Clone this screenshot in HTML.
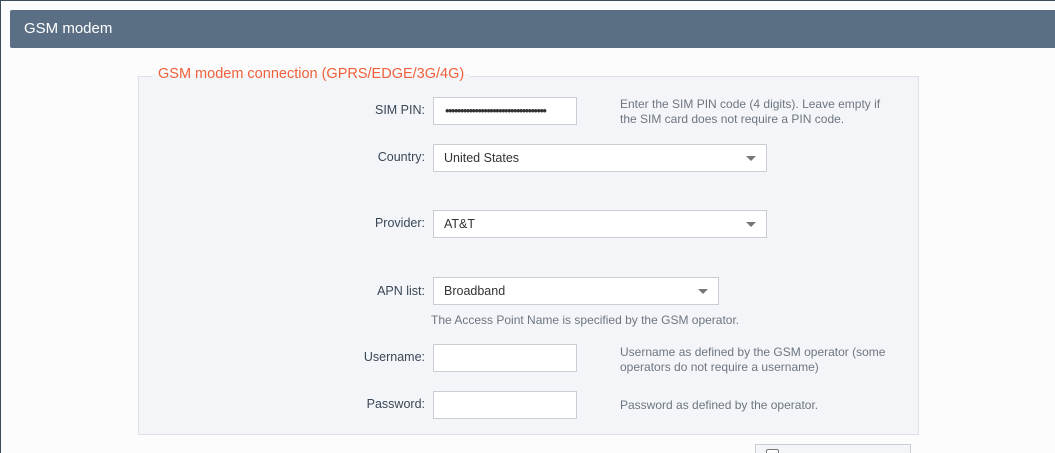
<!DOCTYPE html>
<html><head><style>
html,body{margin:0;width:1055px;height:453px;overflow:hidden}
body{background:#fcfcfd;font-family:"Liberation Sans",sans-serif;position:relative;border-top:1px solid #3b4b5e;border-left:1px solid #3b4b5e;box-sizing:border-box}
.hdr{position:absolute;left:9px;top:9px;width:1050px;height:38px;background:#5b6f84;border-radius:2px;color:#fff;font-size:15px;line-height:38px;padding-left:14px;box-sizing:border-box}
.fs{position:absolute;left:137px;top:75px;width:781px;height:359px;background:#f3f5f8;border:1px solid #dde1e6;box-sizing:border-box}
.lg{position:absolute;left:151px;top:65px;padding:0 6px;color:#f0603a;font-size:14.5px;background:linear-gradient(#fcfcfd 50%,#f3f5f8 50%)}
.lb{position:absolute;right:630px;font-size:12.5px;color:#3a4757}
.in{position:absolute;left:432px;background:#fff;border:1px solid #c9ced5;height:28px;box-sizing:border-box;font-size:12.5px;color:#333;padding-left:10px;line-height:26px}
.ar{position:absolute;right:10px;top:11px;border-left:5px solid transparent;border-right:5px solid transparent;border-top:5px solid #777}
.h{position:absolute;left:619px;font-size:12px;color:#6d7680;line-height:15px}
</style></head><body>
<div class="hdr">GSM modem</div>
<div class="fs"></div>
<div class="lg">GSM modem connection (GPRS/EDGE/3G/4G)</div>
<div class="lb" style="top:102px">SIM PIN:</div>
<div class="in" style="top:96px;width:144px;letter-spacing:-1.6px;font-size:13px;overflow:hidden;white-space:nowrap;padding-left:11px">••••••••••••••••••••••••••••••••••</div>
<div class="h" style="top:96px">Enter the SIM PIN code (4 digits). Leave empty if<br>the SIM card does not require a PIN code.</div>
<div class="lb" style="top:149px">Country:</div>
<div class="in" style="top:143px;width:334px">United States<span class="ar"></span></div>
<div class="lb" style="top:215px">Provider:</div>
<div class="in" style="top:209px;width:334px">AT&amp;T<span class="ar"></span></div>
<div class="lb" style="top:283px">APN list:</div>
<div class="in" style="top:276px;width:286px">Broadband<span class="ar"></span></div>
<div class="h" style="top:312px;left:430px">The Access Point Name is specified by the GSM operator.</div>
<div class="lb" style="top:349px">Username:</div>
<div class="in" style="top:343px;width:144px"></div>
<div class="h" style="top:344px">Username as defined by the GSM operator (some<br>operators do not require a username)</div>
<div class="lb" style="top:396px">Password:</div>
<div class="in" style="top:390px;width:144px"></div>
<div class="h" style="top:397px">Password as defined by the operator.</div>
<div style="position:absolute;left:754px;top:443px;width:154px;height:20px;border:1px solid #c9ced5;background:#f3f5f8"><div style="position:absolute;left:10px;top:4px;width:11px;height:11px;border:1px solid #777;border-radius:2px;background:#fff"></div></div>
</body></html>
